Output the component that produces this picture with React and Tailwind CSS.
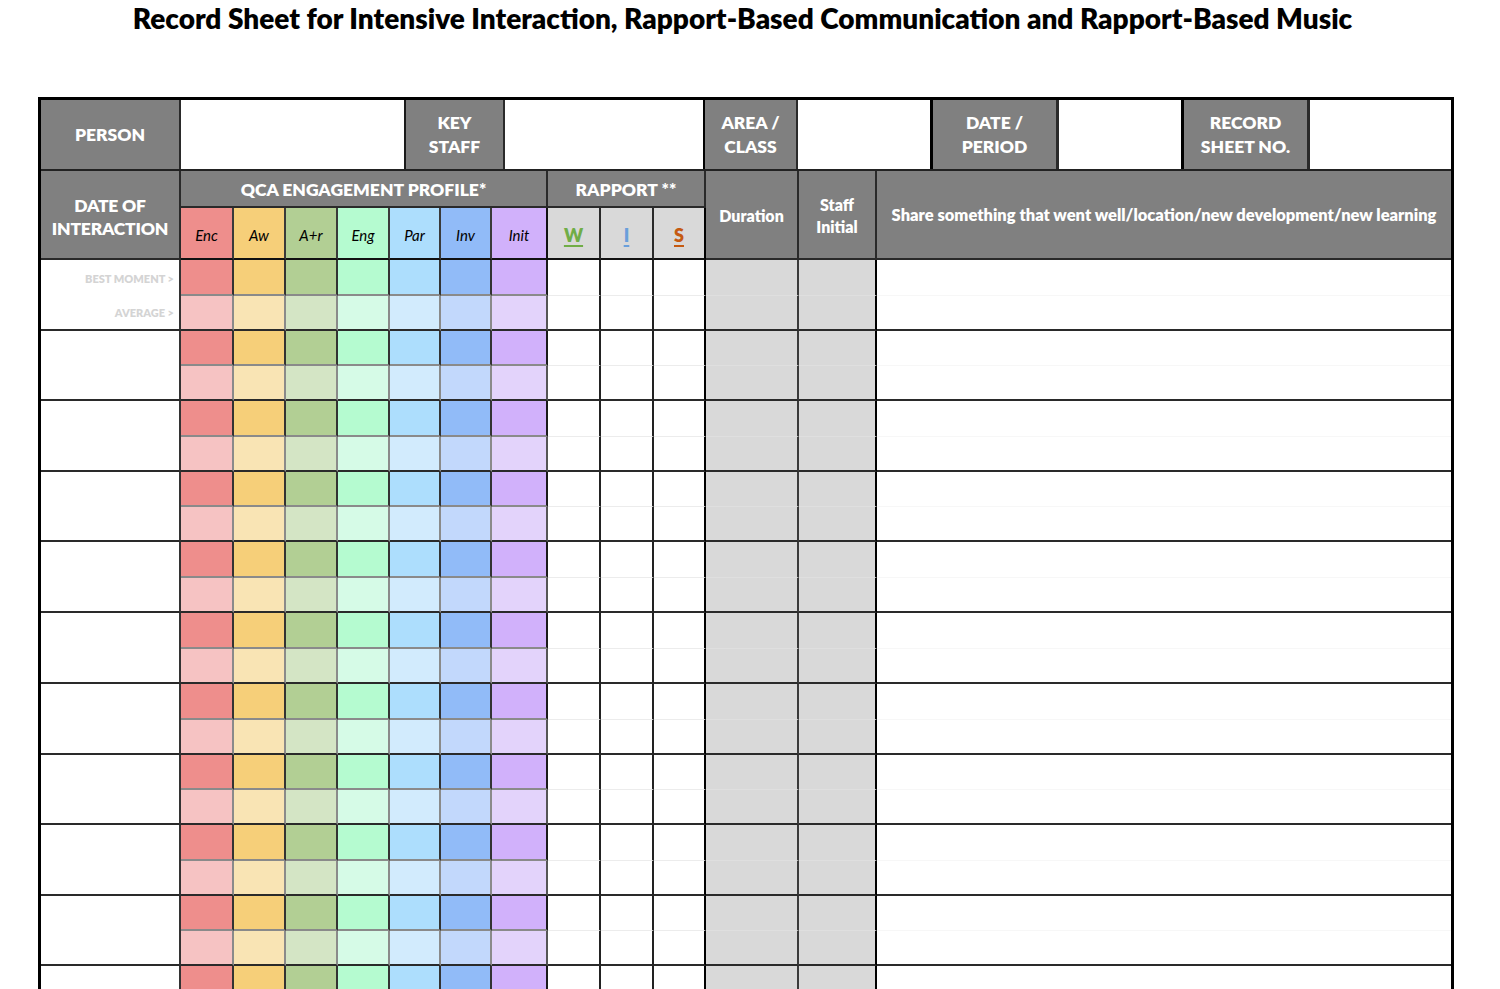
import React from "react";

const COLS =
  "grid grid-cols-[140px_53px_52px_52px_52px_51px_51px_56px_53px_53px_52px_93px_78px_574px]";

const CATS = [
  { k: "Enc", best: "bg-[#ee8e8c]", avg: "bg-[#f6c3c3]" },
  { k: "Aw", best: "bg-[#f6cf79]", avg: "bg-[#f9e4b4]" },
  { k: "A+r", best: "bg-[#b2cf94]", avg: "bg-[#d4e5c5]" },
  { k: "Eng", best: "bg-[#b5fbd0]", avg: "bg-[#d6fbe7]" },
  { k: "Par", best: "bg-[#addefd]", avg: "bg-[#d2ebfd]" },
  { k: "Inv", best: "bg-[#91bbf8]", avg: "bg-[#c2d8fc]" },
  { k: "Init", best: "bg-[#d1b1fb]", avg: "bg-[#e3d3fb]" },
];

const GROUPS = [
  [36, 35],
  [35, 35],
  [36, 35],
  [35, 35],
  [36, 35],
  [36, 35],
  [36, 35],
  [35, 35],
  [36, 35],
  [35, 35],
  [36, 35],
];

const gray = "bg-[#808080] text-white font-extrabold";

function Row1() {
  const cells = [
    { w: "w-[140px]", label: ["PERSON"], b: "border-r-2 border-r-[#2a2a2a]" },
    { w: "w-[225px]", b: "border-r-2 border-r-[#1a1a1a]" },
    { w: "w-[99px]", label: ["KEY", "STAFF"], b: "border-r-2 border-r-[#2a2a2a]" },
    { w: "w-[200px]", b: "border-r-2 border-r-black" },
    { w: "w-[93px]", label: ["AREA /", "CLASS"], b: "border-r-2 border-r-[#2a2a2a]" },
    { w: "w-[135px]", b: "border-r-[3px] border-r-black" },
    { w: "w-[126px]", label: ["DATE /", "PERIOD"], b: "border-r-[3px] border-r-[#2a2a2a]" },
    { w: "w-[125px]", b: "border-r-[3px] border-r-black" },
    { w: "w-[126px]", label: ["RECORD", "SHEET NO."], b: "border-r-[3px] border-r-[#2a2a2a]" },
    { w: "flex-1", b: "" },
  ];
  return (
    <div className="flex h-[71px] border-b-2 border-b-[#222]">
      {cells.map((c, i) => (
        <div
          key={i}
          className={`${c.w} ${c.b} h-full flex flex-col items-center justify-center pt-[1px] text-[17.5px] leading-[24px] ${
            c.label ? gray : "bg-white"
          }`}
        >
          {c.label && c.label.map((l) => <span key={l}>{l}</span>)}
        </div>
      ))}
    </div>
  );
}

function Row2() {
  const dark = "border-[#2a2a2a]";
  return (
    <div className={`${COLS} grid-rows-[37px_52px]`}>
      <div className={`row-span-2 ${gray} border-r-2 border-b-2 ${dark} flex flex-col items-center justify-center pt-[4px] text-[17.5px] leading-[23px] tracking-[-0.2px]`}>
        <span>DATE OF</span>
        <span>INTERACTION</span>
      </div>
      <div className={`col-span-7 ${gray} border-r-2 border-b-2 ${dark} flex items-center justify-center pt-[3px] text-[17.5px]`}>
        QCA ENGAGEMENT PROFILE*
      </div>
      <div className={`col-span-3 ${gray} border-r-2 border-b-2 ${dark} flex items-center justify-center pt-[3px] text-[17.5px]`}>
        RAPPORT **
      </div>
      <div className={`row-span-2 ${gray} border-r-2 border-b-2 ${dark} flex items-center justify-center pt-[2px] text-[16px]`}>
        Duration
      </div>
      <div className={`row-span-2 ${gray} border-r-2 border-b-2 ${dark} flex flex-col items-center justify-center pt-[2px] text-[16px] leading-[22px]`}>
        <span>Staff</span>
        <span>Initial</span>
      </div>
      <div className={`row-span-2 ${gray} border-b-2 ${dark} flex items-center justify-center pt-[2px] text-[16.5px] whitespace-nowrap`}>
        Share something that went well/location/new development/new learning
      </div>
      {CATS.map((c, i) => (
        <div
          key={c.k}
          className={`${c.best} border-b-2 border-b-[#111] border-r-2 ${
            i === 6 ? "border-r-[#111]" : "border-r-[#3a3a3a]"
          } flex items-center justify-center italic text-[15px] text-black pt-[5px]`}
        >
          {c.k}
        </div>
      ))}
      {[
        { t: "W", c: "text-[#70ad47] decoration-[#70ad47]" },
        { t: "I", c: "text-[#6a9fdb] decoration-[#6a9fdb]" },
        { t: "S", c: "text-[#c55a11] decoration-[#c55a11]" },
      ].map((x, i) => (
        <div
          key={x.t}
          className={`bg-[#d9d9d9] border-b-2 border-b-[#111] border-r-2 ${
            i === 2 ? "border-r-black" : "border-r-[#2a2a2a]"
          } flex items-center justify-center pt-[4px]`}
        >
          <span className={`font-extrabold text-[18px] underline underline-offset-[3px] decoration-2 ${x.c}`}>{x.t}</span>
        </div>
      ))}
    </div>
  );
}

function Group({ h, first }) {
  const line = "border-b-[#2a2a2a]";
  const cellsFor = (row) => {
    const isBest = row === 0;
    const out = [];
    CATS.forEach((c, i) => {
      out.push(
        <div
          key={`c${row}${i}`}
          className={
            isBest
              ? `${c.best} border-r-2 ${i === 6 ? "border-r-[#1a1a1a]" : "border-r-[#333]"} border-b-2 border-b-[#8a8a8a]`
              : `${c.avg} border-r-2 ${i === 6 ? "border-r-[#555]" : "border-r-[#8a8a8a]"} border-b-2 ${line}`
          }
        />
      );
    });
    ["W", "I", "S"].forEach((k, i) => {
      out.push(
        <div
          key={`r${row}${k}`}
          className={`bg-white border-r-2 ${i === 2 ? "border-r-black" : "border-r-[#222]"} ${
            isBest ? "border-b border-b-[#ececec]" : `border-b-2 ${line}`
          }`}
        />
      );
    });
    out.push(
      <div
        key={`d${row}`}
        className={`bg-[#d9d9d9] border-r-2 border-r-[#3a3a3a] ${
          isBest ? "border-b border-b-[#dfdfdf]" : `border-b-2 ${line}`
        }`}
      />
    );
    out.push(
      <div
        key={`s${row}`}
        className={`bg-[#d9d9d9] border-r-2 border-r-black ${
          isBest ? "border-b border-b-[#dfdfdf]" : `border-b-2 ${line}`
        }`}
      />
    );
    out.push(
      <div
        key={`n${row}`}
        className={`bg-white ${isBest ? "border-b border-b-[#f7f7f7]" : `border-b-2 ${line}`}`}
      />
    );
    return out;
  };
  return (
    <div className={COLS} style={{ gridTemplateRows: `${h[0]}px ${h[1]}px` }}>
      <div className={`row-span-2 bg-white border-r-2 border-r-[#333] border-b-2 ${line} flex flex-col`}>
        {first && (
          <>
            <div className="flex-1 flex items-center justify-end pr-[5px] pt-[3px] text-[11px] font-extrabold text-[#d4d4d4]">
              BEST MOMENT &gt;
            </div>
            <div className="flex-1 flex items-center justify-end pr-[5px] pt-[3px] text-[11px] font-extrabold text-[#d4d4d4]">
              AVERAGE &gt;
            </div>
          </>
        )}
      </div>
      {cellsFor(0)}
      {cellsFor(1)}
    </div>
  );
}

export default function App() {
  return (
    <div
      className="w-[1500px] h-[989px] overflow-hidden bg-white text-black"
      style={{ fontFamily: "Lato, 'Open Sans', sans-serif" }}
    >
      <div className="h-[97px] w-[1485px] flex justify-center">
        <h1 className="text-[28px] leading-[36px] font-extrabold whitespace-nowrap">
          Record Sheet for Intensive Interaction, Rapport-Based Communication and Rapport-Based Music
        </h1>
      </div>
      <div className="ml-[38px] w-[1416px] border-t-[3px] border-x-[3px] border-black">
        <Row1 />
        <Row2 />
        {GROUPS.map((h, i) => (
          <Group key={i} h={h} first={i === 0} />
        ))}
      </div>
    </div>
  );
}
